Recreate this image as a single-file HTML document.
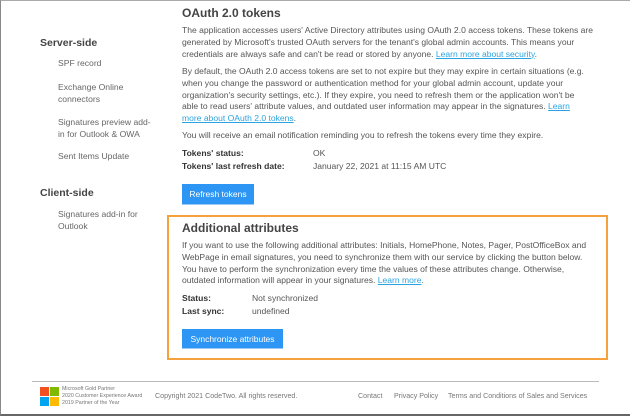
<!DOCTYPE html>
<html><head><meta charset="utf-8"><style>
*{margin:0;padding:0;box-sizing:border-box}
body{width:630px;height:416px;overflow:hidden;background:#fff;font-family:"Liberation Sans",sans-serif;color:#555;font-size:8.55px;position:relative}
.frame{position:absolute;left:0;top:0;width:630px;height:416px;border-left:1px solid #888;border-top:1px solid #aaa;border-bottom:2px solid #666}
.a{position:absolute;white-space:nowrap}
.p{line-height:11.8px}
h1{position:absolute;font-size:12px;font-weight:bold;color:#444}
.side{font-size:8.6px;color:#666;line-height:11.5px}
.sh{font-weight:bold;font-size:10.5px;color:#444}
a{color:#2aa3e0;text-decoration:underline}
b{color:#333}
.btn{position:absolute;background:#2d95f4;color:#fff;font-size:8.5px;display:flex;align-items:center;justify-content:center;border-bottom:1px solid #9cc9f3}
.box{position:absolute;left:167px;top:215px;width:441px;height:145px;border:2px solid #f7a13c}
.foot{font-size:7.1px;color:#777}
</style></head><body>
<div class="frame"></div>
<div class="a sh" style="left:40px;top:37px">Server-side</div>
<div class="a side" style="left:58px;top:58px">SPF record</div>
<div class="a side" style="left:58px;top:82px">Exchange Online<br>connectors</div>
<div class="a side" style="left:58px;top:117px">Signatures preview add-<br>in for Outlook &amp; OWA</div>
<div class="a side" style="left:58px;top:151px">Sent Items Update</div>
<div class="a sh" style="left:40px;top:187px">Client-side</div>
<div class="a side" style="left:58px;top:209px">Signatures add-in for<br>Outlook</div>

<h1 style="left:182px;top:6px">OAuth 2.0 tokens</h1>
<div class="a p" style="left:182px;top:25px">The application accesses users' Active Directory attributes using OAuth 2.0 access tokens. These tokens are<br>generated by Microsoft's trusted OAuth servers for the tenant's global admin accounts. This means your<br>credentials are always safe and can't be read or stored by anyone. <a>Learn more about security</a>.</div>
<div class="a p" style="left:182px;top:66px">By default, the OAuth 2.0 access tokens are set to not expire but they may expire in certain situations (e.g.<br>when you change the password or authentication method for your global admin account, update your<br>organization's security settings, etc.). If they expire, you need to refresh them or the application won't be<br>able to read users' attribute values, and outdated user information may appear in the signatures. <a>Learn</a><br><a>more about OAuth 2.0 tokens</a>.</div>
<div class="a p" style="left:182px;top:130px">You will receive an email notification reminding you to refresh the tokens every time they expire.</div>
<div class="a p" style="left:182px;top:148px"><b>Tokens' status:</b></div>
<div class="a p" style="left:313px;top:148px">OK</div>
<div class="a p" style="left:182px;top:161px"><b>Tokens' last refresh date:</b></div>
<div class="a p" style="left:313px;top:161px">January 22, 2021 at 11:15 AM UTC</div>
<div class="btn" style="left:182px;top:184px;width:72px;height:21px">Refresh tokens</div>

<div class="box"></div>
<h1 style="left:182px;top:221px">Additional attributes</h1>
<div class="a p" style="left:182px;top:240px">If you want to use the following additional attributes: Initials, HomePhone, Notes, Pager, PostOfficeBox and<br>WebPage in email signatures, you need to synchronize them with our service by clicking the button below.<br>You have to perform the synchronization every time the values of these attributes change. Otherwise,<br>outdated information will appear in your signatures. <a>Learn more</a>.</div>
<div class="a p" style="left:182px;top:293px"><b>Status:</b></div>
<div class="a p" style="left:252px;top:293px">Not synchronized</div>
<div class="a p" style="left:182px;top:306px"><b>Last sync:</b></div>
<div class="a p" style="left:252px;top:306px">undefined</div>
<div class="btn" style="left:182px;top:329px;width:101px;height:20px">Synchronize attributes</div>

<div class="a" style="left:32px;top:381px;width:567px;height:1px;background:#bbb"></div>
<div class="a" style="left:40px;top:387px;width:9px;height:9px;background:#f25022"></div>
<div class="a" style="left:50px;top:387px;width:9px;height:9px;background:#7fba00"></div>
<div class="a" style="left:40px;top:397px;width:9px;height:9px;background:#00a4ef"></div>
<div class="a" style="left:50px;top:397px;width:9px;height:9px;background:#ffb900"></div>
<div class="a" style="left:62px;top:386px;font-size:5.3px;line-height:7px;color:#777">Microsoft Gold Partner<br>2020 Customer Experience Award<br>2019 Partner of the Year</div>
<div class="a foot" style="left:155px;top:392px">Copyright 2021 CodeTwo. All rights reserved.</div>
<div class="a foot" style="left:358px;top:392px">Contact</div>
<div class="a foot" style="left:394px;top:392px">Privacy Policy</div>
<div class="a foot" style="left:448px;top:392px">Terms and Conditions of Sales and Services</div>
</body></html>
